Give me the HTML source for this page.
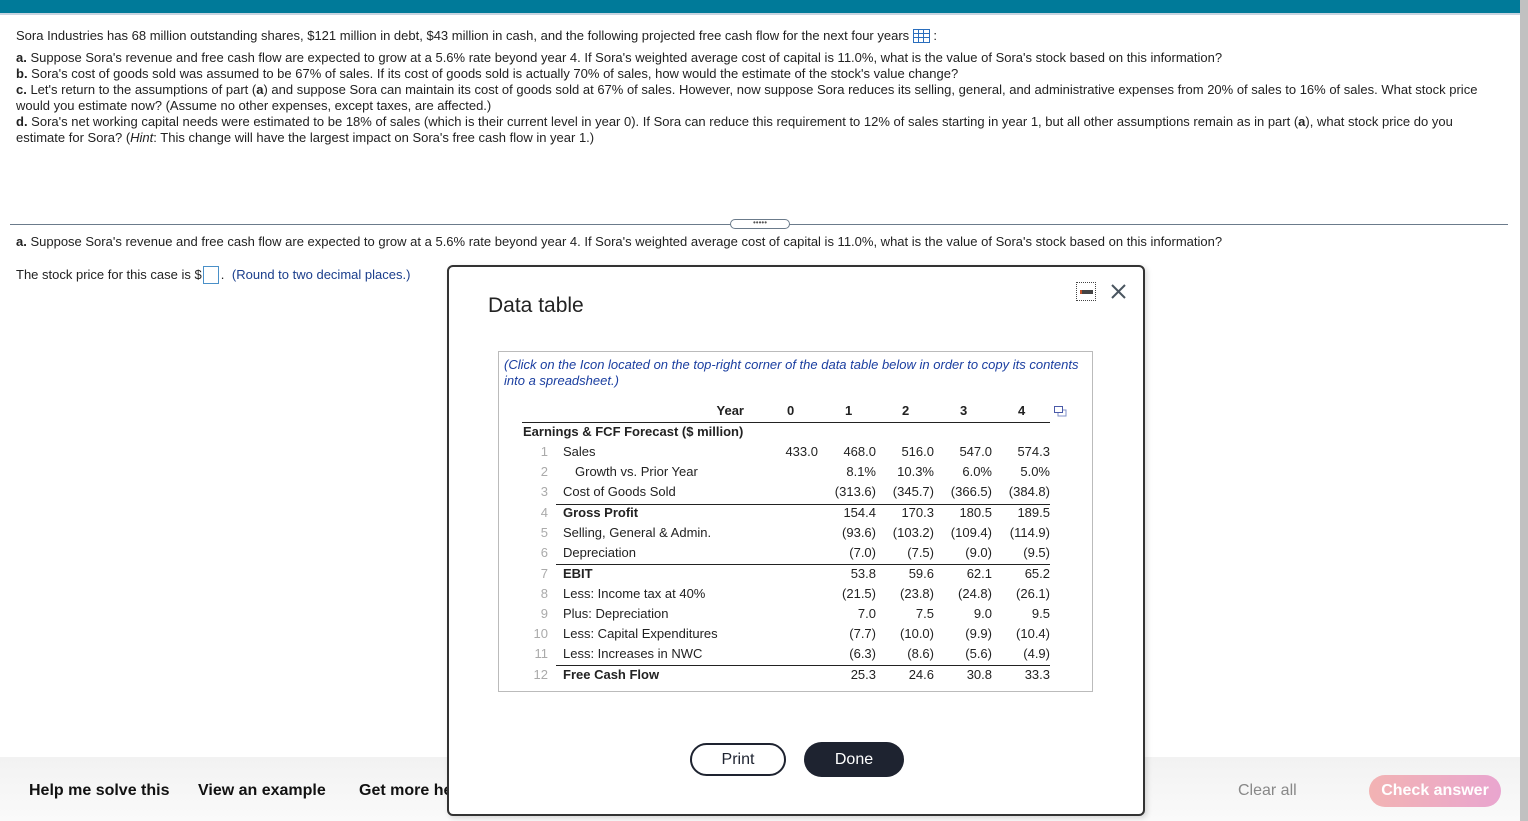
<!DOCTYPE html>
<html><head><style>
*{margin:0;padding:0;box-sizing:border-box}
body{width:1528px;height:821px;position:relative;overflow:hidden;background:#fff;font-family:"Liberation Sans",Arial,sans-serif;font-size:13px;color:#222}
.a{position:absolute;white-space:nowrap}
.q{left:16px;line-height:16px}
.r{position:absolute;text-align:right;white-space:nowrap}
.n{color:#aaa}
.hl{position:absolute;height:1px;background:#222}
.c{position:absolute;left:0;top:0;width:1528px;height:821px;font-size:13px;line-height:14px}
</style></head><body>
<div class="a" style="left:0;top:0;width:1520px;height:13px;background:#007a99"></div>
<div class="a" style="left:0;top:13px;width:1520px;height:2px;background:#c8d4e0"></div>
<div class="a" style="right:0;top:0;width:8px;height:821px;background:#c1c1c1"></div>

<div class="a q" style="top:28px">Sora Industries has 68 million outstanding shares, $121 million in debt, $43 million in cash, and the following projected free cash flow for the next four years <span style="display:inline-block;width:17px;height:14px;border:1.5px solid #2a6ebd;vertical-align:-3px;background:linear-gradient(#2a6ebd,#2a6ebd) 0 3px/100% 1px no-repeat,linear-gradient(#2a6ebd,#2a6ebd) 0 7px/100% 1px no-repeat,linear-gradient(90deg,#2a6ebd,#2a6ebd) 4px 0/1px 100% no-repeat,linear-gradient(90deg,#2a6ebd,#2a6ebd) 9px 0/1px 100% no-repeat"></span> :</div>
<div class="a q" style="top:50px"><b>a.</b> Suppose Sora's revenue and free cash flow are expected to grow at a 5.6% rate beyond year 4. If Sora's weighted average cost of capital is 11.0%, what is the value of Sora's stock based on this information?</div>
<div class="a q" style="top:66px"><b>b.</b> Sora's cost of goods sold was assumed to be 67% of sales. If its cost of goods sold is actually 70% of sales, how would the estimate of the stock's value change?</div>
<div class="a q" style="top:82px"><b>c.</b> Let's return to the assumptions of part (<b>a</b>) and suppose Sora can maintain its cost of goods sold at 67% of sales. However, now suppose Sora reduces its selling, general, and administrative expenses from 20% of sales to 16% of sales. What stock price</div>
<div class="a q" style="top:98px">would you estimate now? (Assume no other expenses, except taxes, are affected.)</div>
<div class="a q" style="top:114px"><b>d.</b> Sora's net working capital needs were estimated to be 18% of sales (which is their current level in year 0). If Sora can reduce this requirement to 12% of sales starting in year 1, but all other assumptions remain as in part (<b>a</b>), what stock price do you</div>
<div class="a q" style="top:130px">estimate for Sora? (<i>Hint</i>: This change will have the largest impact on Sora's free cash flow in year 1.)</div>

<div class="a" style="left:10px;top:224px;width:1498px;height:1px;background:#6b7b8b"></div>
<div class="a" style="left:730px;top:219px;width:60px;height:10px;border:1px solid #6b7b8b;border-radius:5px;background:#fff;font-size:8px;line-height:5px;text-align:center;color:#555">•••••</div>

<div class="a q" style="top:234px"><b>a.</b> Suppose Sora's revenue and free cash flow are expected to grow at a 5.6% rate beyond year 4. If Sora's weighted average cost of capital is 11.0%, what is the value of Sora's stock based on this information?</div>
<div class="a q" style="top:266px">The stock price for this case is $<span style="display:inline-block;width:16px;height:18px;border:1px solid #4a90c8;vertical-align:-5px;margin:0 2px 0 1px"></span>. <span style="color:#1a3e8c;margin-left:4px">(Round to two decimal places.)</span></div>

<div class="a" style="left:0;top:757px;width:1520px;height:64px;background:linear-gradient(#f2f2f2,#fafafa)"></div>
<div class="a" style="left:29px;top:782px;font-size:16px;font-weight:bold;color:#111">Help me solve this</div>
<div class="a" style="left:198px;top:782px;font-size:16px;font-weight:bold;color:#111">View an example</div>
<div class="a" style="left:359px;top:782px;font-size:16px;font-weight:bold;color:#111">Get more help</div>
<div class="a" style="left:1238px;top:782px;font-size:16px;color:#888">Clear all</div>
<div class="a" style="left:1369px;top:775px;width:132px;height:32px;border-radius:16px;background:linear-gradient(90deg,#f2b3b3,#e9a5cf);color:#fff;font-weight:bold;font-size:16px;text-align:center;line-height:32px">Check answer</div>

<div class="a" style="left:447px;top:265px;width:698px;height:551px;border:2px solid #333;border-radius:6px;background:#fff;box-shadow:2px 2px 6px rgba(0,0,0,.15)"></div>
<div class="a" style="left:488px;top:294px;font-size:21px;color:#222">Data table</div>
<div class="a" style="left:1076px;top:282px;width:20px;height:19px;border:1px dotted #444"></div>
<div class="a" style="left:1080px;top:290px;width:13px;height:4px;background:#444;border-left:2px solid #c0502a"></div>
<svg class="a" style="left:1110px;top:283px" width="17" height="17"><path d="M2 2L15 15M15 2L2 15" stroke="#4a5560" stroke-width="2"/></svg>

<div class="a" style="left:498px;top:351px;width:595px;height:341px;border:1px solid #bbb"></div>
<div class="a" style="left:504px;top:357px;line-height:16px;font-style:italic;color:#1a3ea0;font-size:13px">(Click on the Icon located on the top-right corner of the data table below in order to copy its contents<br>into a spreadsheet.)</div>
<svg class="a" style="left:1054px;top:406px" width="13" height="11"><rect x="0.5" y="0.5" width="8" height="6" fill="none" stroke="#4a5aa8"/><path d="M4 7v3h8V4H9" fill="none" stroke="#8090c8"/></svg>

<div class="c">
<div class="r" style="right:784px;top:404px;font-weight:bold">Year</div>
<div class="a" style="left:787px;top:404px;font-weight:bold">0</div>
<div class="a" style="left:845px;top:404px;font-weight:bold">1</div>
<div class="a" style="left:902px;top:404px;font-weight:bold">2</div>
<div class="a" style="left:960px;top:404px;font-weight:bold">3</div>
<div class="a" style="left:1018px;top:404px;font-weight:bold">4</div>
<div class="hl" style="left:522px;top:422px;width:528px"></div>
<div class="a" style="left:523px;top:425px;font-weight:bold">Earnings &amp; FCF Forecast ($ million)</div>
</div>

<div class="hl" style="left:556px;top:504px;width:494px"></div>
<div class="hl" style="left:556px;top:564px;width:494px"></div>
<div class="hl" style="left:556px;top:665px;width:494px"></div>

<div class="c">
<div class="r n" style="right:980px;top:445px">1</div><div class="a" style="left:563px;top:445px">Sales</div><div class="r" style="right:710px;top:445px">433.0</div><div class="r" style="right:652px;top:445px">468.0</div><div class="r" style="right:594px;top:445px">516.0</div><div class="r" style="right:536px;top:445px">547.0</div><div class="r" style="right:478px;top:445px">574.3</div>
<div class="r n" style="right:980px;top:465px">2</div><div class="a" style="left:575px;top:465px">Growth vs. Prior Year</div><div class="r" style="right:652px;top:465px">8.1%</div><div class="r" style="right:594px;top:465px">10.3%</div><div class="r" style="right:536px;top:465px">6.0%</div><div class="r" style="right:478px;top:465px">5.0%</div>
<div class="r n" style="right:980px;top:485px">3</div><div class="a" style="left:563px;top:485px">Cost of Goods Sold</div><div class="r" style="right:652px;top:485px">(313.6)</div><div class="r" style="right:594px;top:485px">(345.7)</div><div class="r" style="right:536px;top:485px">(366.5)</div><div class="r" style="right:478px;top:485px">(384.8)</div>
<div class="r n" style="right:980px;top:506px">4</div><div class="a" style="left:563px;top:506px;font-weight:bold">Gross Profit</div><div class="r" style="right:652px;top:506px">154.4</div><div class="r" style="right:594px;top:506px">170.3</div><div class="r" style="right:536px;top:506px">180.5</div><div class="r" style="right:478px;top:506px">189.5</div>
<div class="r n" style="right:980px;top:526px">5</div><div class="a" style="left:563px;top:526px">Selling, General &amp; Admin.</div><div class="r" style="right:652px;top:526px">(93.6)</div><div class="r" style="right:594px;top:526px">(103.2)</div><div class="r" style="right:536px;top:526px">(109.4)</div><div class="r" style="right:478px;top:526px">(114.9)</div>
<div class="r n" style="right:980px;top:546px">6</div><div class="a" style="left:563px;top:546px">Depreciation</div><div class="r" style="right:652px;top:546px">(7.0)</div><div class="r" style="right:594px;top:546px">(7.5)</div><div class="r" style="right:536px;top:546px">(9.0)</div><div class="r" style="right:478px;top:546px">(9.5)</div>
<div class="r n" style="right:980px;top:567px">7</div><div class="a" style="left:563px;top:567px;font-weight:bold">EBIT</div><div class="r" style="right:652px;top:567px">53.8</div><div class="r" style="right:594px;top:567px">59.6</div><div class="r" style="right:536px;top:567px">62.1</div><div class="r" style="right:478px;top:567px">65.2</div>
<div class="r n" style="right:980px;top:587px">8</div><div class="a" style="left:563px;top:587px">Less: Income tax at 40%</div><div class="r" style="right:652px;top:587px">(21.5)</div><div class="r" style="right:594px;top:587px">(23.8)</div><div class="r" style="right:536px;top:587px">(24.8)</div><div class="r" style="right:478px;top:587px">(26.1)</div>
<div class="r n" style="right:980px;top:607px">9</div><div class="a" style="left:563px;top:607px">Plus: Depreciation</div><div class="r" style="right:652px;top:607px">7.0</div><div class="r" style="right:594px;top:607px">7.5</div><div class="r" style="right:536px;top:607px">9.0</div><div class="r" style="right:478px;top:607px">9.5</div>
<div class="r n" style="right:980px;top:627px">10</div><div class="a" style="left:563px;top:627px">Less: Capital Expenditures</div><div class="r" style="right:652px;top:627px">(7.7)</div><div class="r" style="right:594px;top:627px">(10.0)</div><div class="r" style="right:536px;top:627px">(9.9)</div><div class="r" style="right:478px;top:627px">(10.4)</div>
<div class="r n" style="right:980px;top:647px">11</div><div class="a" style="left:563px;top:647px">Less: Increases in NWC</div><div class="r" style="right:652px;top:647px">(6.3)</div><div class="r" style="right:594px;top:647px">(8.6)</div><div class="r" style="right:536px;top:647px">(5.6)</div><div class="r" style="right:478px;top:647px">(4.9)</div>
<div class="r n" style="right:980px;top:668px">12</div><div class="a" style="left:563px;top:668px;font-weight:bold">Free Cash Flow</div><div class="r" style="right:652px;top:668px">25.3</div><div class="r" style="right:594px;top:668px">24.6</div><div class="r" style="right:536px;top:668px">30.8</div><div class="r" style="right:478px;top:668px">33.3</div>
</div>

<div class="a" style="left:690px;top:743px;width:96px;height:33px;border:2px solid #1e2330;border-radius:17px;text-align:center;line-height:29px;font-size:16px;color:#1e2330">Print</div>
<div class="a" style="left:804px;top:742px;width:100px;height:35px;border-radius:18px;background:#1e2330;text-align:center;line-height:35px;font-size:16px;color:#fff">Done</div>
</body></html>
